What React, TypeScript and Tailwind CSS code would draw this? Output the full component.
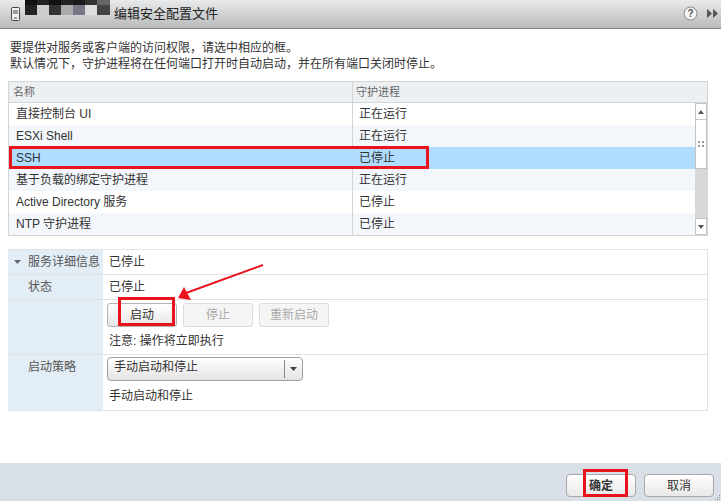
import React from "react";

const rows = [
  { name: "直接控制台 UI", state: "正在运行" },
  { name: "ESXi Shell", state: "正在运行" },
  { name: "SSH", state: "已停止" },
  { name: "基于负载的绑定守护进程", state: "正在运行" },
  { name: "Active Directory 服务", state: "已停止" },
  { name: "NTP 守护进程", state: "已停止" },
];

const blocks = [
  [25, 0, 12, 5, "#111"], [37, 0, 12, 5, "#222"], [49, 0, 12, 5, "#111"], [61, 0, 12, 5, "#222"], [73, 0, 12, 5, "#1a1a1a"], [85, 0, 12, 5, "#333"], [97, 0, 13, 5, "#666"],
  [25, 5, 12, 10, "#222"], [37, 5, 12, 10, "#ccc"], [49, 5, 12, 10, "#333"], [61, 5, 12, 10, "#aaa"], [73, 5, 12, 10, "#778"], [85, 5, 12, 10, "#ddd"], [97, 5, 13, 10, "#444"],
] as const;

const App: React.FC = () => {
  return (
    <div className="relative flex h-[501px] w-[721px] flex-col overflow-hidden bg-white text-[12px] text-[#333] font-['Liberation_Sans','Noto_Sans_CJK_SC',sans-serif]">
      {/* title bar */}
      <div className="flex h-[29px] shrink-0 items-center border-b border-[#808080] bg-gradient-to-b from-[#e9eaeb] to-[#b9baba] pl-[11px] pr-[3px]">
        <svg width="9" height="14" viewBox="0 0 9 14" className="shrink-0">
          <rect x="0.5" y="0.5" width="8" height="13" rx="1" fill="#f0f0f0" stroke="#444" />
          <path d="M2 4h5M2 6h5M3 11h3" stroke="#444" />
        </svg>
        <svg width="110" height="15" viewBox="0 0 110 15" className="mb-[13px] ml-[-20px] shrink-0 overflow-visible">
          {blocks.map(([x, y, w, h, c], i) => (
            <rect key={i} x={x} y={y} width={w} height={h} fill={c} />
          ))}
        </svg>
        <span className="mb-[2px] ml-[4px] text-[13px] leading-none text-[#222]">编辑安全配置文件</span>
        <svg width="15" height="15" viewBox="0 0 15 15" className="mb-[2px] ml-auto mr-[9px] shrink-0">
          <circle cx="7.5" cy="7.5" r="6.5" fill="#f4f4f4" stroke="#8a8a8a" />
          <text x="7.5" y="11" textAnchor="middle" fontSize="10" fontWeight="700" fill="#555">?</text>
        </svg>
        <svg width="11" height="9" viewBox="0 0 11 9" className="mb-[2px] shrink-0">
          <path d="M0 0l5 4.5L0 9zM6 0l5 4.5L6 9z" fill="#555" />
        </svg>
      </div>

      {/* intro */}
      <div className="mt-[11px] px-[10px] leading-[16px]">
        <p>要提供对服务或客户端的访问权限，请选中相应的框。</p>
        <p>默认情况下，守护进程将在任何端口打开时自动启动，并在所有端口关闭时停止。</p>
      </div>

      {/* service table */}
      <div className="ml-[8px] mt-[9px] w-[700px] border border-[#d4d4d4]">
        <div className="flex h-[21px] items-center border-b border-[#d4d4d4] bg-[#edf0f3] text-[11px] text-[#666]">
          <div className="w-[344px] border-r border-[#d4d4d4] pl-[4px] leading-[20px]">名称</div>
          <div className="pl-[3px]">守护进程</div>
        </div>
        <div className="flex">
          <div className="min-w-0 flex-1">
            {rows.map((r, i) => (
              <div
                key={r.name}
                className={`flex h-[22px] items-center ${i === 2 ? "bg-[#b0dcff]" : i % 2 === 1 ? "bg-[#f3f6fa]" : "bg-white"}`}
              >
                <div className={`flex h-full w-[344px] items-center pl-[7px] ${i === 2 ? "" : "border-r border-[#d4d4d4]"}`}>{r.name}</div>
                <div className="pl-[6px]">{r.state}</div>
              </div>
            ))}
          </div>
          <div className="flex w-[12px] shrink-0 flex-col bg-[#d8d8d8]">
            <div className="flex h-[17px] items-center justify-center border border-[#c4c4c4] bg-white">
              <svg width="6" height="4" viewBox="0 0 6 4"><path d="M3 0l3 4H0z" fill="#555" /></svg>
            </div>
            <div className="flex h-[49px] items-center justify-center border-x border-b border-[#c4c4c4] bg-white">
              <svg width="6" height="6" viewBox="0 0 6 6"><path d="M0 0h2v2H0zM4 0h2v2H4zM0 4h2v2H0zM4 4h2v2H4z" fill="#999" /></svg>
            </div>
            <div className="flex-1" />
            <div className="flex h-[17px] items-center justify-center border border-[#c4c4c4] bg-white">
              <svg width="6" height="4" viewBox="0 0 6 4"><path d="M0 0h6L3 4z" fill="#555" /></svg>
            </div>
          </div>
        </div>
      </div>

      {/* service details */}
      <div className="ml-[8px] mt-[13px] w-[700px] border-y border-r border-[#e2e2e2]">
        <div className="flex h-[25px] border-b border-[#e2e2e2]">
          <div className="flex w-[95px] shrink-0 items-center bg-[#e3edf5] pl-[6px] text-[#555]">
            <svg width="7" height="4" viewBox="0 0 7 4" className="mr-[7px]"><path d="M0 0h7L3.5 4z" fill="#667" /></svg>
            <span className="whitespace-nowrap">服务详细信息</span>
          </div>
          <div className="flex items-center pl-[6px]">已停止</div>
        </div>
        <div className="flex h-[25px] border-b border-[#e2e2e2]">
          <div className="flex w-[95px] shrink-0 items-center bg-[#e3edf5] pl-[20px] text-[#555]">状态</div>
          <div className="flex items-center pl-[6px]">已停止</div>
        </div>
        <div className="flex h-[55px] border-b border-[#e2e2e2]">
          <div className="w-[95px] shrink-0 bg-[#e3edf5]" />
          <div className="pl-[4px] pt-[3px]">
            <div className="flex gap-[6px]">
              <button className="h-[24px] w-[70px] rounded-[3px] border border-[#b4b4b4] bg-gradient-to-b from-white to-[#e6e6e6] text-[#333]">启动</button>
              <button className="h-[24px] w-[70px] rounded-[3px] border border-[#dcdcdc] bg-[#f5f5f5] text-[#aaa]">停止</button>
              <button className="h-[24px] w-[70px] rounded-[3px] border border-[#dcdcdc] bg-[#f5f5f5] text-[#aaa]">重新启动</button>
            </div>
            <div className="ml-[2px] mt-[6px] leading-[16px]">注意: 操作将立即执行</div>
          </div>
        </div>
        <div className="flex h-[55px]">
          <div className="w-[95px] shrink-0 bg-[#e3edf5] pl-[20px] pt-[3px] text-[#555]">启动策略</div>
          <div className="pl-[4px] pt-[2px]">
            <div className="flex h-[24px] w-[196px] items-center rounded-[4px] border border-[#a0a0a0] bg-gradient-to-b from-white to-[#e4e4e4]">
              <span className="flex-1 pb-[5px] pl-[6px]">手动启动和停止</span>
              <div className="flex h-[18px] w-[18px] items-center justify-center border-l border-[#888]">
                <svg width="7" height="4" viewBox="0 0 7 4"><path d="M0 0h7L3.5 4z" fill="#444" /></svg>
              </div>
            </div>
            <div className="ml-[2px] mt-[7px] leading-[16px]">手动启动和停止</div>
          </div>
        </div>
      </div>

      {/* footer */}
      <div className="relative mt-auto flex h-[38px] shrink-0 items-center justify-end gap-[8px] bg-[#d9dfe6] pr-[7px] pt-[7px]">
        <button className="h-[23px] w-[70px] rounded-[4px] border border-[#a8a8a8] bg-gradient-to-b from-white to-[#e8e8e8] font-bold text-[#333]">确定</button>
        <button className="h-[23px] w-[70px] rounded-[4px] border border-[#a8a8a8] bg-gradient-to-b from-white to-[#e8e8e8] text-[#333]">取消</button>
        <svg className="absolute bottom-0 right-0" width="6" height="6" viewBox="0 0 6 6">
          <path d="M4 0h1v1H4zM2 2h1v1H2zM4 2h1v1H4zM0 4h1v1H0zM2 4h1v1H2zM4 4h1v1H4z" fill="#8a8f96" />
        </svg>
      </div>

      {/* red annotations laid over the screenshot */}
      <div className="absolute left-[9px] top-[146px] h-[23px] w-[420px] border-[3px] border-[#e8131c]" />
      <div className="absolute left-[118px] top-[297px] h-[29px] w-[57px] border-[3px] border-[#e8131c]" />
      <div className="absolute left-[583px] top-[469px] h-[28px] w-[45px] border-[3px] border-[#e8131c]" />
      <svg className="absolute left-[170px] top-[260px]" width="100" height="48" viewBox="0 0 100 48">
        <path d="M93 5L16 33" stroke="#e8131c" strokeWidth="2" />
        <path d="M8 38L14 27L21 40z" fill="#e8131c" />
      </svg>
    </div>
  );
};

export default App;
